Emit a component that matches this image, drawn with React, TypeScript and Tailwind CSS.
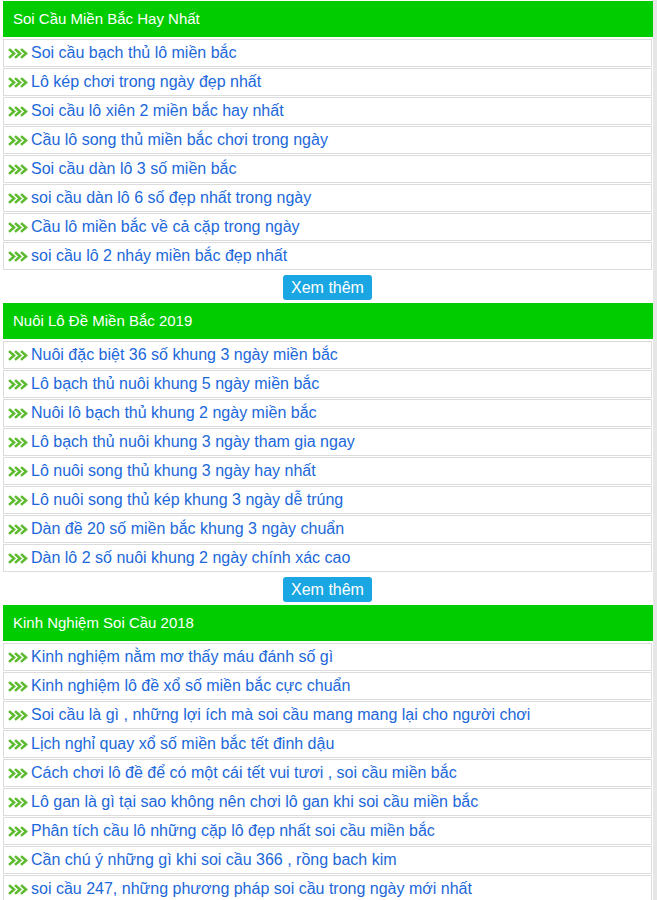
import React from "react";

type Section = { title: string; items: string[]; more?: boolean };

const sections: Section[] = [
  {
    title: "Soi Cầu Miền Bắc Hay Nhất",
    more: true,
    items: [
      "Soi cầu bạch thủ lô miền bắc",
      "Lô kép chơi trong ngày đẹp nhất",
      "Soi cầu lô xiên 2 miền bắc hay nhất",
      "Cầu lô song thủ miền bắc chơi trong ngày",
      "Soi cầu dàn lô 3 số miền bắc",
      "soi cầu dàn lô 6 số đẹp nhất trong ngày",
      "Cầu lô miền bắc về cả cặp trong ngày",
      "soi cầu lô 2 nháy miền bắc đẹp nhất",
    ],
  },
  {
    title: "Nuôi Lô Đề Miền Bắc 2019",
    more: true,
    items: [
      "Nuôi đặc biệt 36 số khung 3 ngày miền bắc",
      "Lô bạch thủ nuôi khung 5 ngày miền bắc",
      "Nuôi lô bạch thủ khung 2 ngày miền bắc",
      "Lô bạch thủ nuôi khung 3 ngày tham gia ngay",
      "Lô nuôi song thủ khung 3 ngày hay nhất",
      "Lô nuôi song thủ kép khung 3 ngày dễ trúng",
      "Dàn đề 20 số miền bắc khung 3 ngày chuẩn",
      "Dàn lô 2 số nuôi khung 2 ngày chính xác cao",
    ],
  },
  {
    title: "Kinh Nghiệm Soi Cầu 2018",
    items: [
      "Kinh nghiệm nằm mơ thấy máu đánh số gì",
      "Kinh nghiệm lô đề xổ số miền bắc cực chuẩn",
      "Soi cầu là gì , những lợi ích mà soi cầu mang mang lại cho người chơi",
      "Lịch nghỉ quay xổ số miền bắc tết đinh dậu",
      "Cách chơi lô đề để có một cái tết vui tươi , soi cầu miền bắc",
      "Lô gan là gì tại sao không nên chơi lô gan khi soi cầu miền bắc",
      "Phân tích cầu lô những cặp lô đẹp nhất soi cầu miền bắc",
      "Cần chú ý những gì khi soi cầu 366 , rồng bach kim",
      "soi cầu 247, những phương pháp soi cầu trong ngày mới nhất",
    ],
  },
];

function Chevrons() {
  return (
    <svg width="20" height="11" viewBox="0 0 20 11" className="shrink-0">
      <g fill="none" stroke="#5dbb2f" strokeWidth="2.6" strokeLinecap="square">
        <polyline points="2,2 6,5.5 2,9" />
        <polyline points="8,2 12,5.5 8,9" />
        <polyline points="14,2 18,5.5 14,9" />
      </g>
    </svg>
  );
}

function Block({ section }: { section: Section }) {
  return (
    <div>
      <div className="h-[36px] bg-[#00cc00] text-white text-[15px] flex items-center pl-[10px] mr-[-1px]">
        {section.title}
      </div>
      <ul className="pt-[2px]">
        {section.items.map((item) => (
          <li
            key={item}
            className="h-[28px] mb-px border border-[#dcdcdc] bg-white flex items-center gap-[3px] pl-[4px] text-[16px] text-[#1c68da] whitespace-nowrap overflow-hidden"
          >
            <Chevrons />
            <a href="#">{item}</a>
          </li>
        ))}
      </ul>
      {section.more && (
        <div className="flex justify-center pt-[4px] pb-[3px]">
          <button className="h-[25px] w-[89px] rounded-[3px] bg-[#1aa6e2] text-white text-[16px] leading-none">
            Xem thêm
          </button>
        </div>
      )}
    </div>
  );
}

export default function App() {
  return (
    <div
      className="flex w-[657px] h-[900px] overflow-hidden bg-white"
      style={{ fontFamily: '"Liberation Sans", Arial, sans-serif' }}
    >
      <div className="w-[3px] shrink-0" />
      <div className="w-[649px] pt-px">
        {sections.map((s) => (
          <Block key={s.title} section={s} />
        ))}
      </div>
      <div className="w-px shrink-0" />
      <div className="flex-1 bg-[#e6e6e6]" />
    </div>
  );
}
